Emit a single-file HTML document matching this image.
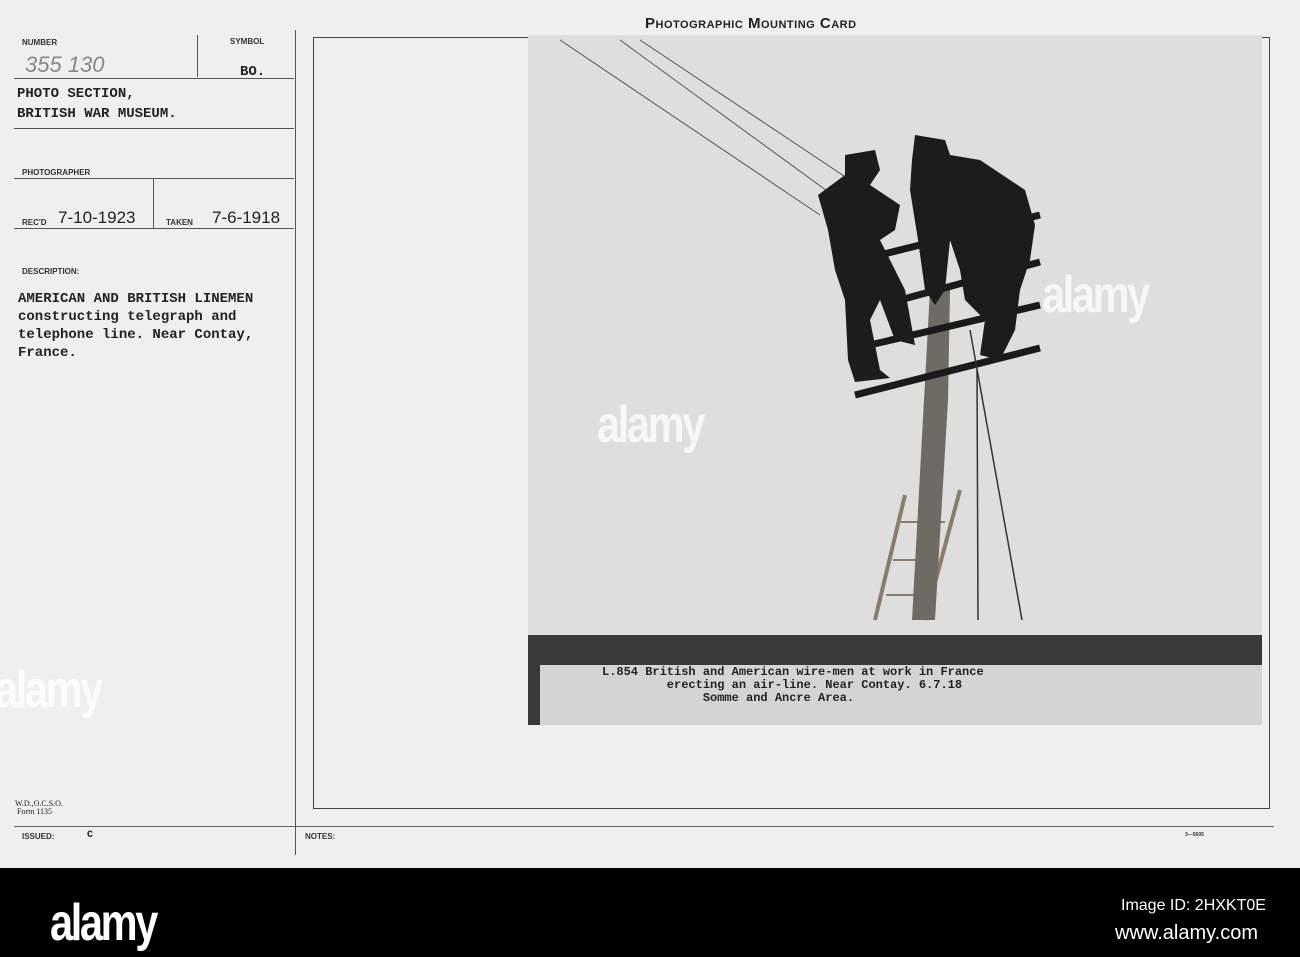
<!DOCTYPE html>
<html><head><style>
body{margin:0;width:1300px;height:957px;background:#000;overflow:hidden;position:relative;font-family:"Liberation Mono",monospace;}
.card{position:absolute;left:0;top:0;width:1300px;height:868px;background:#efefed;}
.t{position:absolute;color:#222;white-space:nowrap}
.lab{position:absolute;font-family:"Liberation Sans",sans-serif;font-size:8px;font-weight:bold;color:#333}
.hl{position:absolute;height:1px;background:#555}
.vl{position:absolute;width:1px;background:#555}
.wm{position:absolute;font-family:"Liberation Sans",sans-serif;font-weight:bold;color:rgba(255,255,255,0.75);font-size:52px;letter-spacing:-3px;transform:scaleX(0.8);transform-origin:left;white-space:nowrap}
</style></head><body>
<div class="card">
<div class="t" style="left:645px;top:15px;font-family:'Liberation Sans',sans-serif;font-weight:bold;font-size:15px;font-variant:small-caps;letter-spacing:0.5px">Photographic Mounting Card</div>
<div class="lab" style="left:22px;top:38px">NUMBER</div>
<div class="lab" style="left:230px;top:37px">SYMBOL</div>
<div class="t" style="left:25px;top:52px;font-family:'Liberation Sans',sans-serif;font-size:22px;color:#888;font-style:italic">355 130</div>
<div class="t" style="left:240px;top:64px;font-size:14px;font-weight:bold">BO.</div>
<div class="vl" style="left:197px;top:35px;height:42px"></div>
<div class="hl" style="left:14px;top:78px;width:280px"></div>
<div class="t" style="left:17px;top:84px;font-size:14px;font-weight:bold;line-height:20px">PHOTO SECTION,<br>BRITISH WAR MUSEUM.</div>
<div class="hl" style="left:14px;top:128px;width:280px"></div>
<div class="lab" style="left:22px;top:168px">PHOTOGRAPHER</div>
<div class="hl" style="left:14px;top:178px;width:280px"></div>
<div class="vl" style="left:153px;top:178px;height:50px"></div>
<div class="lab" style="left:22px;top:218px">REC'D</div>
<div class="t" style="left:58px;top:208px;font-family:'Liberation Sans',sans-serif;font-size:17px">7-10-1923</div>
<div class="lab" style="left:166px;top:218px">TAKEN</div>
<div class="t" style="left:212px;top:208px;font-family:'Liberation Sans',sans-serif;font-size:17px">7-6-1918</div>
<div class="hl" style="left:14px;top:228px;width:280px"></div>
<div class="lab" style="left:22px;top:267px">DESCRIPTION:</div>
<div class="t" style="left:18px;top:290px;font-size:14px;font-weight:bold;line-height:18px">AMERICAN AND BRITISH LINEMEN<br>constructing telegraph and<br>telephone line. Near Contay,<br>France.</div>
<div class="wm" style="left:-5px;top:660px;color:rgba(255,255,255,0.8)">alamy</div>
<div class="t" style="left:15px;top:800px;font-family:'Liberation Serif',serif;font-size:8px;line-height:8px">W.D.,O.C.S.O.<br>&nbsp;Form 1135</div>
<div class="hl" style="left:14px;top:826px;width:1260px;background:#666"></div>
<div class="vl" style="left:295px;top:30px;height:825px"></div>
<div class="lab" style="left:22px;top:832px">ISSUED:</div>
<div class="t" style="left:87px;top:830px;font-size:10px;font-weight:bold">C</div>
<div class="lab" style="left:305px;top:832px">NOTES:</div>
<div class="lab" style="left:1185px;top:832px;font-size:5px">3—5605</div>
<div style="position:absolute;left:313px;top:37px;width:955px;height:770px;border:1px solid #444"></div>
<div style="position:absolute;left:528px;top:35px;width:734px;height:600px;background:#dedede"></div>
<div style="position:absolute;left:528px;top:635px;width:734px;height:30px;background:#3a3a3a"></div>
<div style="position:absolute;left:528px;top:665px;width:734px;height:60px;background:#d4d4d4"></div>
<div style="position:absolute;left:528px;top:665px;width:12px;height:60px;background:#3a3a3a"></div>
<div class="t" style="left:602px;top:666px;font-size:12px;line-height:13px;color:#222;font-weight:bold">L.854  British and American wire-men at work in France<br>&nbsp;&nbsp;&nbsp;&nbsp;&nbsp;&nbsp;&nbsp;&nbsp;&nbsp;erecting an air-line.  Near Contay.  6.7.18<br>&nbsp;&nbsp;&nbsp;&nbsp;&nbsp;&nbsp;&nbsp;&nbsp;&nbsp;&nbsp;&nbsp;&nbsp;&nbsp;&nbsp;Somme and Ancre Area.</div>
<svg style="position:absolute;left:0;top:0" width="1300" height="868">
<g stroke="#555" stroke-width="1" fill="none">
<line x1="560" y1="40" x2="820" y2="215"/><line x1="620" y1="40" x2="860" y2="215"/><line x1="640" y1="40" x2="880" y2="200"/>
</g>
<g stroke="#8a7d6a" stroke-width="4"><line x1="905" y1="495" x2="875" y2="620"/><line x1="960" y1="490" x2="925" y2="620"/></g>
<g stroke="#8a7d6a" stroke-width="2"><line x1="900" y1="522" x2="945" y2="522"/><line x1="893" y1="560" x2="938" y2="560"/><line x1="886" y1="595" x2="930" y2="595"/></g>
<polygon points="930,290 950,290 948,400 935,620 912,620" fill="#6e6a64"/>
<g stroke="#1a1a1a" stroke-width="7">
<line x1="855" y1="395" x2="1040" y2="348"/><line x1="870" y1="345" x2="1040" y2="305"/><line x1="900" y1="300" x2="1040" y2="262"/><line x1="880" y1="255" x2="1040" y2="215"/>
</g>
<g stroke="#333" stroke-width="1.5"><line x1="970" y1="330" x2="1022" y2="620"/><line x1="977" y1="370" x2="978" y2="620"/></g>
<g fill="#1c1c1c">
<path d="M845,155 L875,150 L880,170 L870,185 L900,205 L895,230 L880,240 L905,290 L915,345 L895,340 L880,300 L870,320 L880,370 L890,378 L855,382 L848,360 L845,300 L835,270 L828,230 L818,195 L845,175 Z"/>
<path d="M915,135 L945,140 L950,155 L980,160 L1010,180 L1025,190 L1035,225 L1030,260 L1020,290 L1015,330 L1000,360 L980,355 L985,320 L965,300 L960,270 L950,240 L945,290 L935,305 L925,290 L918,240 L910,190 L912,160 Z"/>
</g>
</svg>
<div class="wm" style="left:597px;top:395px">alamy</div>
<div class="wm" style="left:1042px;top:265px">alamy</div>
</div>
<div class="t" style="left:50px;top:893px;font-family:'Liberation Sans',sans-serif;font-weight:bold;font-size:52px;color:#fff;letter-spacing:-3px;transform:scaleX(0.8);transform-origin:left">alamy</div>
<div class="t" style="left:1121px;top:897px;font-family:'Liberation Sans',sans-serif;font-size:16px;color:#fff">Image ID: 2HXKT0E</div>
<div class="t" style="left:1115px;top:922px;font-family:'Liberation Sans',sans-serif;font-size:20px;color:#fff">www.alamy.com</div>
</body></html>
